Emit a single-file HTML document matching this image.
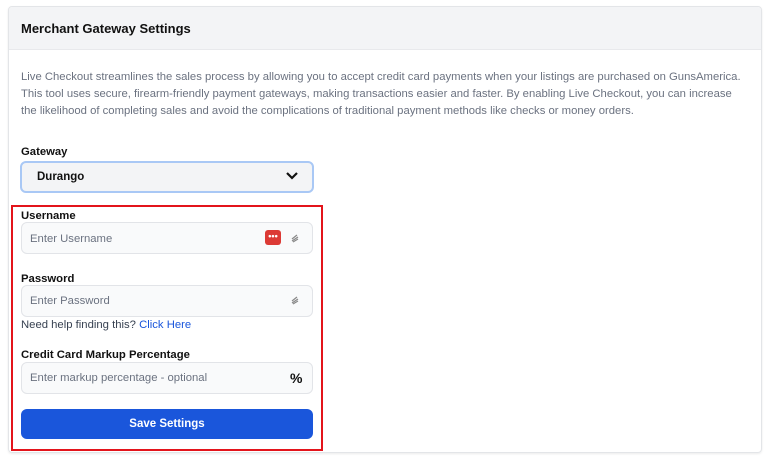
<!DOCTYPE html>
<html><head><style>
body{margin:0;background:#fff;font-family:"Liberation Sans",sans-serif;width:768px;height:460px;position:relative;overflow:hidden}
.card{position:absolute;left:8px;top:6px;width:752px;height:445px;border:1px solid #e3e5e8;border-radius:4px;box-shadow:0 1px 2px rgba(0,0,0,.08);overflow:hidden}
.hdr{height:42px;background:#f3f4f6;border-bottom:1px solid #e8e9ec}
.abs{position:absolute}
.t{font-size:13px;font-weight:bold;color:#111;left:21px;top:21px}
.p{left:21px;top:69px;font-size:11.3px;line-height:17px;color:#6b7280;width:725px}
.lbl{font-size:11.3px;color:#111;left:21px;font-weight:bold;-webkit-text-stroke:0}
.in{left:21px;width:290px;height:30px;border:1px solid #e2e4e8;border-radius:6px;background:#f9fafb}
.ph{font-size:11.3px;color:#6b7280;left:30px}
.sel{left:20px;top:161px;width:290px;height:28px;border:2px solid #a9c8f5;border-radius:6px;background:#f3f4f6}
.red{left:11px;top:205px;width:308px;height:242px;border:2px solid #e3141b}
.btn{left:21px;top:409px;width:292px;height:30px;background:#1a56db;border-radius:6px;color:#fff;font-size:11.5px;font-weight:bold;text-align:center;line-height:30px}
</style></head><body>
<div class="card"><div class="hdr"></div></div>
<div class="abs t">Merchant Gateway Settings</div>
<div class="abs p">Live Checkout streamlines the sales process by allowing you to accept credit card payments when your listings are purchased on GunsAmerica. This tool uses secure, firearm-friendly payment gateways, making transactions easier and faster. By enabling Live Checkout, you can increase the likelihood of completing sales and avoid the complications of traditional payment methods like checks or money orders.</div>
<div class="abs lbl" style="top:146px">Gateway</div>
<div class="abs sel"></div>
<div class="abs" style="left:37px;top:171px;font-size:11.5px;font-weight:bold;color:#111">Durango</div>
<svg class="abs" style="left:285px;top:171px" width="14" height="10"><path d="M2 2l5 5 5-5" stroke="#111" stroke-width="2.2" fill="none"/></svg>
<div class="abs red"></div>
<div class="abs lbl" style="top:210px">Username</div>
<div class="abs in" style="top:222px"></div>
<div class="abs ph" style="top:233px">Enter Username</div>
<div class="abs" style="left:265px;top:230px;width:16px;height:15px;background:#dc3a35;border-radius:3px;color:#fff;font-size:9px;line-height:13px;text-align:center;font-weight:bold">•••</div>
<svg class="abs" style="left:290px;top:233px" width="10" height="10"><path d="M2 6l5-4M2 8l6-4M3 9l5-3" stroke="#888" stroke-width="1.2" fill="none"/></svg>
<div class="abs lbl" style="top:273px">Password</div>
<div class="abs in" style="top:285px"></div>
<div class="abs ph" style="top:295px">Enter Password</div>
<svg class="abs" style="left:290px;top:295px" width="10" height="10"><path d="M2 6l5-4M2 8l6-4M3 9l5-3" stroke="#888" stroke-width="1.2" fill="none"/></svg>
<div class="abs" style="left:21px;top:319px;font-size:11.3px;color:#374151">Need help finding this? <span style="color:#1a56db">Click Here</span></div>
<div class="abs lbl" style="top:349px">Credit Card Markup Percentage</div>
<div class="abs in" style="top:362px"></div>
<div class="abs ph" style="top:372px">Enter markup percentage - optional</div>
<div class="abs" style="left:290px;top:370px;font-size:14px;font-weight:bold;color:#111">%</div>
<div class="abs btn">Save Settings</div>
</body></html>
